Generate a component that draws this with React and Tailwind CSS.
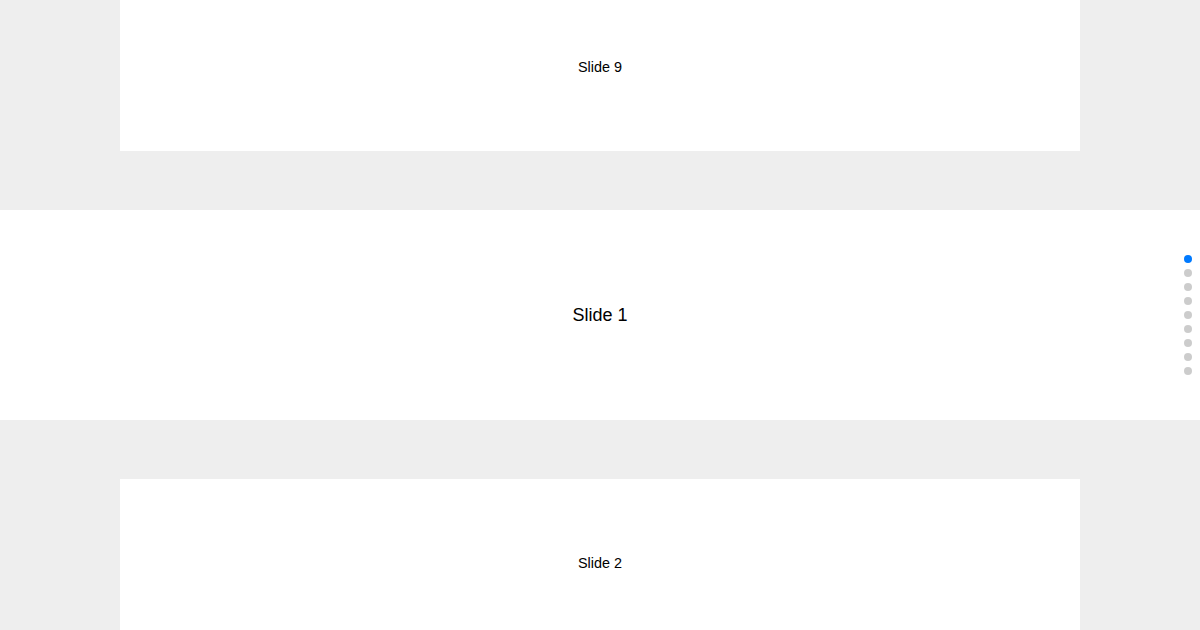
const slides = [1, 2, 3, 4, 5, 6, 7, 8, 9]

export default function App() {
  return (
    <div
      className="relative h-[630px] w-[1200px] overflow-hidden bg-[#eeeeee] text-black"
      style={{ fontFamily: '"Liberation Sans", Helvetica, Arial, sans-serif' }}
    >
      <div className="flex flex-col items-center gap-[59px]">
        {/* previous slide */}
        <div className="-mt-[17px] flex h-[168px] w-[960px] shrink-0 items-center justify-center bg-white pt-[2px] text-[14.4px]">
          Slide 9
        </div>

        {/* active slide */}
        <div className="flex h-[210px] w-full shrink-0 items-center justify-center bg-white text-[18px]">
          Slide 1
        </div>

        {/* next slide */}
        <div className="flex h-[168px] w-[960px] shrink-0 items-center justify-center bg-white pt-[2px] text-[14.4px]">
          Slide 2
        </div>
      </div>

      {/* pagination */}
      <div className="absolute right-[8px] top-1/2 flex -translate-y-1/2 flex-col gap-[6px]">
        {slides.map((n) => (
          <span
            key={n}
            className={`block h-[8px] w-[8px] rounded-full ${n === 1 ? 'bg-[#007aff]' : 'bg-black/20'}`}
          />
        ))}
      </div>
    </div>
  )
}
